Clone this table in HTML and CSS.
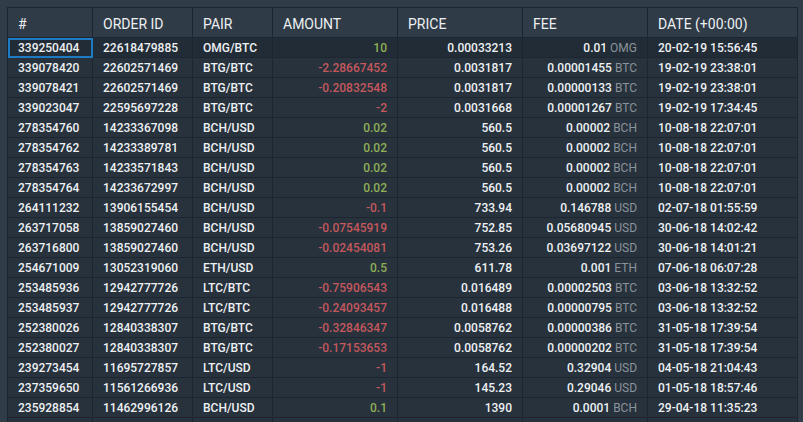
FILE: index.html
```html
<!DOCTYPE html>
<html>
<head>
<meta charset="utf-8">
<link rel="stylesheet" href="styles.css">
</head>
<body>
<div class="panel">
<table class="trades">
<colgroup>
<col class="c-id"><col class="c-order"><col class="c-pair"><col class="c-amt"><col class="c-price"><col class="c-fee"><col class="c-date">
</colgroup>
<thead>
<tr><th>#</th><th>ORDER ID</th><th>PAIR</th><th>AMOUNT</th><th>PRICE</th><th>FEE</th><th>DATE (+00:00)</th></tr>
</thead>
<tbody>
<tr class="active"><td class="sel">339250404</td><td>22618479885</td><td>OMG/BTC</td><td class="num pos">10</td><td class="num">0.00033213</td><td class="num">0.01 <span class="cur">OMG</span></td><td>20-02-19 15:56:45</td></tr>
<tr><td>339078420</td><td>22602571469</td><td>BTG/BTC</td><td class="num neg">-2.28667452</td><td class="num">0.0031817</td><td class="num">0.00001455 <span class="cur">BTC</span></td><td>19-02-19 23:38:01</td></tr>
<tr><td>339078421</td><td>22602571469</td><td>BTG/BTC</td><td class="num neg">-0.20832548</td><td class="num">0.0031817</td><td class="num">0.00000133 <span class="cur">BTC</span></td><td>19-02-19 23:38:01</td></tr>
<tr><td>339023047</td><td>22595697228</td><td>BTG/BTC</td><td class="num neg">-2</td><td class="num">0.0031668</td><td class="num">0.00001267 <span class="cur">BTC</span></td><td>19-02-19 17:34:45</td></tr>
<tr><td>278354760</td><td>14233367098</td><td>BCH/USD</td><td class="num pos">0.02</td><td class="num">560.5</td><td class="num">0.00002 <span class="cur">BCH</span></td><td>10-08-18 22:07:01</td></tr>
<tr><td>278354762</td><td>14233389781</td><td>BCH/USD</td><td class="num pos">0.02</td><td class="num">560.5</td><td class="num">0.00002 <span class="cur">BCH</span></td><td>10-08-18 22:07:01</td></tr>
<tr><td>278354763</td><td>14233571843</td><td>BCH/USD</td><td class="num pos">0.02</td><td class="num">560.5</td><td class="num">0.00002 <span class="cur">BCH</span></td><td>10-08-18 22:07:01</td></tr>
<tr><td>278354764</td><td>14233672997</td><td>BCH/USD</td><td class="num pos">0.02</td><td class="num">560.5</td><td class="num">0.00002 <span class="cur">BCH</span></td><td>10-08-18 22:07:01</td></tr>
<tr><td>264111232</td><td>13906155454</td><td>BCH/USD</td><td class="num neg">-0.1</td><td class="num">733.94</td><td class="num">0.146788 <span class="cur">USD</span></td><td>02-07-18 01:55:59</td></tr>
<tr><td>263717058</td><td>13859027460</td><td>BCH/USD</td><td class="num neg">-0.07545919</td><td class="num">752.85</td><td class="num">0.05680945 <span class="cur">USD</span></td><td>30-06-18 14:02:42</td></tr>
<tr><td>263716800</td><td>13859027460</td><td>BCH/USD</td><td class="num neg">-0.02454081</td><td class="num">753.26</td><td class="num">0.03697122 <span class="cur">USD</span></td><td>30-06-18 14:01:21</td></tr>
<tr><td>254671009</td><td>13052319060</td><td>ETH/USD</td><td class="num pos">0.5</td><td class="num">611.78</td><td class="num">0.001 <span class="cur">ETH</span></td><td>07-06-18 06:07:28</td></tr>
<tr><td>253485936</td><td>12942777726</td><td>LTC/BTC</td><td class="num neg">-0.75906543</td><td class="num">0.016489</td><td class="num">0.00002503 <span class="cur">BTC</span></td><td>03-06-18 13:32:52</td></tr>
<tr><td>253485937</td><td>12942777726</td><td>LTC/BTC</td><td class="num neg">-0.24093457</td><td class="num">0.016488</td><td class="num">0.00000795 <span class="cur">BTC</span></td><td>03-06-18 13:32:52</td></tr>
<tr><td>252380026</td><td>12840338307</td><td>BTG/BTC</td><td class="num neg">-0.32846347</td><td class="num">0.0058762</td><td class="num">0.00000386 <span class="cur">BTC</span></td><td>31-05-18 17:39:54</td></tr>
<tr><td>252380027</td><td>12840338307</td><td>BTG/BTC</td><td class="num neg">-0.17153653</td><td class="num">0.0058762</td><td class="num">0.00000202 <span class="cur">BTC</span></td><td>31-05-18 17:39:54</td></tr>
<tr><td>239273454</td><td>11695727857</td><td>LTC/USD</td><td class="num neg">-1</td><td class="num">164.52</td><td class="num">0.32904 <span class="cur">USD</span></td><td>04-05-18 21:04:43</td></tr>
<tr><td>237359650</td><td>11561266936</td><td>LTC/USD</td><td class="num neg">-1</td><td class="num">145.23</td><td class="num">0.29046 <span class="cur">USD</span></td><td>01-05-18 18:57:46</td></tr>
<tr><td>235928854</td><td>11462996126</td><td>BCH/USD</td><td class="num pos">0.1</td><td class="num">1390</td><td class="num">0.0001 <span class="cur">BCH</span></td><td>29-04-18 11:35:23</td></tr>
<tr class="blank"><td></td><td></td><td></td><td></td><td></td><td></td><td></td></tr>
</tbody>
</table>
</div>
</body>
</html>
```
FILE: styles.css
```css
html, body {
  margin: 0;
  padding: 0;
  height: 100%;
  overflow: hidden;
  background: #303c48;
}

.panel {
  padding: 7px 0 0 7px;
}

.trades {
  border-collapse: separate;
  border-spacing: 0;
  table-layout: fixed;
  width: 791px;
  background: #27323d;
  border-left: 1px solid #1d2630;
  border-top: 1px solid #1d2630;
  font-family: Roboto, "Liberation Sans", sans-serif;
  font-size: 12px;
  color: #eef1f3;
}

.c-id { width: 85px; }
.c-order { width: 100px; }
.c-pair { width: 80px; }
.c-amt { width: 125px; }
.c-price { width: 125px; }
.c-fee { width: 125px; }
.c-date { width: 150px; }

.trades th,
.trades td {
  box-sizing: border-box;
  padding: 0 10px;
  border-right: 1px solid #1d2630;
  border-bottom: 1px solid #1d2630;
  white-space: nowrap;
  overflow: hidden;
}

.trades th {
  height: 30px;
  padding-top: 2px;
  background: #2f3b47;
  font-size: 14px;
  font-weight: 400;
  text-align: left;
  color: #edf0f2;
}

.trades td {
  height: 20px;
  padding-top: 1px;
  line-height: 18px;
  font-weight: 500;
}

.trades tr.active td {
  background: #222c36;
}

.trades td.sel {
  outline: 2px solid #1f7bc1;
  outline-offset: -2px;
}

.num { text-align: right; }
.pos { color: #8fae55; font-weight: 400; }
.neg { color: #c4585c; font-weight: 400; }
.cur { color: #8b939b; font-weight: 400; }
```
